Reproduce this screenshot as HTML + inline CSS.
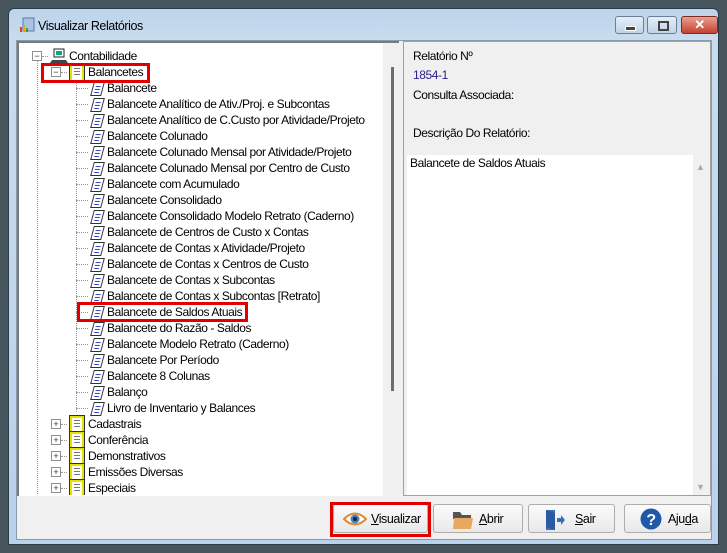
<html><head><style>
body{margin:0;width:727px;height:553px;background:#47565d;position:relative;overflow:hidden;font-family:"Liberation Sans",sans-serif;font-size:12px;letter-spacing:-0.42px;color:#000}
.win{position:absolute;left:8px;top:8px;width:711px;height:537px;background:linear-gradient(#bcd3ea,#c9dcef 30px,#b9d1ea);border:1px solid #2b3b48;border-radius:6px 6px 0 0;box-sizing:border-box}
.title{position:absolute;left:38px;top:19px;font-size:12.5px}
.client{position:absolute;left:16px;top:40px;width:696px;height:500px;background:#f0f0f0;border:1px solid #8a9aa8;box-sizing:border-box}
.tree{position:absolute;left:17px;top:41px;width:382px;height:455px;border-left:2px solid #7a7a7a;border-top:2px solid #7a7a7a;background:#fff;box-sizing:border-box;overflow:hidden}
.sb{position:absolute;left:364px;top:0;width:16px;height:455px;background:#f0f0f0}
.sb i{position:absolute;left:8px;top:24px;width:3px;height:324px;background:#6d6d6d}
.right{position:absolute;left:403px;top:41px;width:308px;height:455px;border:1px solid #a0a0a0;box-sizing:border-box;background:#f0f0f0}
.it{position:absolute;height:16px;line-height:16px;white-space:nowrap}
.box{position:absolute;width:8px;height:8px;border:1px solid #909090;background:#fff;font-size:9px;line-height:8px;text-align:center;color:#333;letter-spacing:0}
.doc{position:absolute;width:9px;height:12px;border:1px solid #333;background:#fff;transform:skewX(-15deg)}
.doc:after{content:"";position:absolute;left:2px;top:3px;width:5px;height:7px;background:repeating-linear-gradient(#3050c0 0 1px,transparent 1px 3px)}
.fold{position:absolute;width:10px;height:14px;border:2px solid #e8e000;outline:1px solid #333;background:#fff}
.fold:after{content:"";position:absolute;left:2px;top:2px;width:6px;height:9px;background:repeating-linear-gradient(#777 0 1px,transparent 1px 3px)}
.btn{position:absolute;top:504px;height:29px;border:1px solid #adadad;border-radius:3px;background:linear-gradient(#fbfbfb,#e8e8e8);box-sizing:border-box;font-size:12.5px;line-height:29px}
.red{position:absolute;border:3px solid #e00000;box-sizing:border-box}
.wb{position:absolute;top:16px;height:18px;border:1px solid #6a7f95;border-radius:3px;background:linear-gradient(#e5eef8,#c1d4e8);box-sizing:border-box}
</style></head><body>
<div class="win"></div>
<svg style="position:absolute;left:19px;top:17px" width="16" height="16"><rect x="4" y="1" width="11" height="13" fill="#a9c3e2" stroke="#5a7aa0"/><rect x="1" y="10" width="2" height="5" fill="#e04020"/><rect x="4" y="8" width="2" height="7" fill="#f0a020"/><rect x="7" y="11" width="2" height="4" fill="#40a040"/></svg>
<div class="title">Visualizar Relatórios</div>
<div class="wb" style="left:615px;width:29px"><div style="position:absolute;left:9px;top:9px;width:9px;height:3px;background:#444;border:1px solid #fff"></div></div>
<div class="wb" style="left:647px;width:30px"><div style="position:absolute;left:10px;top:4px;width:7px;height:6px;border:2px solid #444"></div></div>
<div class="wb" style="left:681px;width:37px;background:linear-gradient(#e8a090,#c84030);border-color:#7a2a20;color:#fff;font-weight:bold;text-align:center;line-height:16px;font-size:13px">✕</div>
<div class="client"></div>
<div class="tree">
<div class="sb"><i></i></div>
</div>
<div id="t" style="position:absolute;left:19px;top:43px;width:362px;height:452px;overflow:hidden">
<div style="position:absolute;left:18px;top:13px;height:440px;border-left:1px dotted #999"></div>
<div style="position:absolute;left:57px;top:29px;height:340px;border-left:1px dotted #999"></div>
</div>
<div class="right">
<div style="position:absolute;left:9px;top:7px">Relatório Nº</div>
<div style="position:absolute;left:9px;top:26px;color:#2b1f8c">1854-1</div>
<div style="position:absolute;left:9px;top:46px">Consulta Associada:</div>
<div style="position:absolute;left:9px;top:84px">Descrição Do Relatório:</div>
<div style="position:absolute;left:3px;top:113px;width:286px;height:340px;background:#fff"><div style="position:absolute;left:3px;top:1px">Balancete de Saldos Atuais</div></div>
<div style="position:absolute;left:292px;top:120px;font-size:9px;color:#aaa">▲</div>
<div style="position:absolute;left:292px;top:440px;font-size:9px;color:#aaa">▼</div>
</div>
<div class="red" style="left:41px;top:63px;width:109px;height:20px"></div>
<div class="red" style="left:77px;top:302px;width:171px;height:20px"></div>
<div class="btn" style="left:333px;width:95px"><svg style="position:absolute;left:9px;top:6px" width="24" height="16"><path d="M1 8Q12-3 23 8Q12 19 1 8Z" fill="#fff" stroke="#e08a30" stroke-width="2"/><circle cx="12" cy="8" r="4.5" fill="#4a80c0"/><circle cx="12" cy="8" r="2" fill="#123"/></svg><span style="position:absolute;left:37px"><u>V</u>isualizar</span></div>
<div class="red" style="left:330px;top:502px;width:101px;height:35px"></div>
<div class="btn" style="left:433px;width:90px"><svg style="position:absolute;left:18px;top:5px" width="22" height="20"><path d="M1 2h7l2 3h9v4H1z" fill="#555"/><path d="M2 8h19l-2 11H1z" fill="#e8a860"/></svg><span style="position:absolute;left:45px"><u>A</u>brir</span></div>
<div class="btn" style="left:528px;width:87px"><svg style="position:absolute;left:15px;top:4px" width="22" height="22"><path d="M2 1h9v4H7v12h4v4H2z" fill="#3a70b8"/><path d="M2 1l9 3v17l-9-3z" fill="#2a5aa0"/><path d="M13 9h4V6l4 5-4 5v-3h-4z" fill="#3a70b8"/></svg><span style="position:absolute;left:46px"><u>S</u>air</span></div>
<div class="btn" style="left:624px;width:87px"><svg style="position:absolute;left:15px;top:3px" width="22" height="22"><circle cx="11" cy="11" r="10.5" fill="#1e5aa8"/><text x="11" y="17" font-family="Liberation Sans" font-weight="bold" font-size="16" fill="#fff" text-anchor="middle">?</text></svg><span style="position:absolute;left:43px">Aju<u>d</u>a</span></div>
<script>
var t=document.getElementById('t'),h='';
function row(y,x,txt,type,box){
 var o='';
 if(box)o+='<div class="box" style="left:'+(x-37)+'px;top:'+(y+3)+'px">'+box+'</div><div style="position:absolute;left:'+(x-27)+'px;top:'+(y+8)+'px;width:6px;border-top:1px dotted #999"></div>';
 else o+='<div style="position:absolute;left:'+(x-31)+'px;top:'+(y+8)+'px;width:12px;border-top:1px dotted #999"></div>';
 if(type=='pc')o+='<svg style="position:absolute;left:'+(x-19)+'px;top:'+(y)+'px" width="18" height="16"><rect x="4" y="1" width="10" height="8" fill="#fff" stroke="#222"/><rect x="6" y="3" width="6" height="4" fill="#0a8"/><path d="M2 12h14l2 3H0z" fill="#444"/></svg>';
 else if(type=='f')o+='<div class="fold" style="left:'+(x-18)+'px;top:'+(y)+'px"></div>';
 else o+='<div class="doc" style="left:'+(x-15)+'px;top:'+(y+2)+'px"></div>';
 o+='<div class="it" style="left:'+x+'px;top:'+y+'px">'+txt+'</div>';
 h+=o;
}
row(5,50,'Contabilidade','pc','−');
row(21,69,'Balancetes','f','−');
var items=['Balancete','Balancete Analítico de Ativ./Proj. e Subcontas','Balancete Analítico de C.Custo por Atividade/Projeto','Balancete Colunado','Balancete Colunado Mensal por Atividade/Projeto','Balancete Colunado Mensal por Centro de Custo','Balancete com Acumulado','Balancete Consolidado','Balancete Consolidado Modelo Retrato (Caderno)','Balancete de Centros de Custo x Contas','Balancete de Contas x Atividade/Projeto','Balancete de Contas x Centros de Custo','Balancete de Contas x Subcontas','Balancete de Contas x Subcontas [Retrato]','Balancete de Saldos Atuais','Balancete do Razão - Saldos','Balancete Modelo Retrato (Caderno)','Balancete Por Período','Balancete 8 Colunas','Balanço','Livro de Inventario y Balances'];
items.forEach(function(s,i){row(37+16*i,88,s,'d');});
['Cadastrais','Conferência','Demonstrativos','Emissões Diversas','Especiais'].forEach(function(s,i){row(373+16*i,69,s,'f','+');});
t.innerHTML+=h;
</script>
</body></html>
